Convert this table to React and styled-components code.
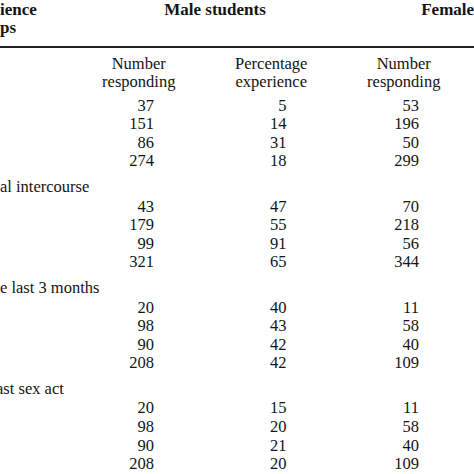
import React from 'react';
import styled, { createGlobalStyle } from 'styled-components';

const GlobalStyle = createGlobalStyle`
  html, body {
    margin: 0;
    padding: 0;
    background: #fff;
  }
`;

const Page = styled.div`
  width: 474px;
  height: 474px;
  overflow: hidden;
  background: #fff;
  color: #141414;
  font-family: "Liberation Serif", "Times New Roman", serif;
`;

const Table = styled.div`
  display: grid;
  grid-template-columns: 72.5px repeat(4, 132.5px);
  width: max-content;
`;

const GroupHead = styled.div`
  font-weight: 700;
  font-size: 17px;
  line-height: 18px;
  padding-top: 1px;
  white-space: nowrap;
`;

const SpanHead = styled(GroupHead)`
  grid-column: span 2;
  text-align: center;
  padding-left: 20px;
`;

const Rule = styled.div`
  grid-column: 1 / -1;
  height: 2px;
  margin-top: 9px;
  background: #222;
`;

const Cell = styled.div`
  font-size: 16.5px;
  line-height: 18.6px;
  white-space: nowrap;
`;

const SubHead = styled(Cell)`
  text-align: center;
  margin-top: 6.6px;
  margin-bottom: 4.8px;
`;

const Value = styled(Cell)`
  text-align: right;
  padding-right: 51px;
`;

const SectionLabel = styled(Cell)`
  grid-column: 1 / -1;
  margin-top: 7px;
  margin-bottom: 1px;
  margin-left: ${props => props.$shift || 0}px;
`;

const sections = [
  {
    label: null,
    rows: [
      ['37', '5', '53'],
      ['151', '14', '196'],
      ['86', '31', '50'],
      ['274', '18', '299'],
    ],
  },
  {
    label: 'al intercourse',
    rows: [
      ['43', '47', '70'],
      ['179', '55', '218'],
      ['99', '91', '56'],
      ['321', '65', '344'],
    ],
  },
  {
    label: 'e last 3 months',
    rows: [
      ['20', '40', '11'],
      ['98', '43', '58'],
      ['90', '42', '40'],
      ['208', '42', '109'],
    ],
  },
  {
    label: 'ast sex act',
    shift: -4,
    rows: [
      ['20', '15', '11'],
      ['98', '20', '58'],
      ['90', '21', '40'],
      ['208', '20', '109'],
    ],
  },
];

export default function App() {
  return (
    <>
      <GlobalStyle />
      <Page>
        <Table>
          <GroupHead>
            ience
            <br />
            ps
          </GroupHead>
          <SpanHead>Male students</SpanHead>
          <SpanHead>Female students</SpanHead>
          <Rule />

          <SubHead />
          <SubHead>
            Number
            <br />
            responding
          </SubHead>
          <SubHead>
            Percentage
            <br />
            experience
          </SubHead>
          <SubHead>
            Number
            <br />
            responding
          </SubHead>
          <SubHead />

          {sections.map((section, i) => (
            <React.Fragment key={i}>
              {section.label && (
                <SectionLabel $shift={section.shift}>{section.label}</SectionLabel>
              )}
              {section.rows.map((row, j) => (
                <React.Fragment key={j}>
                  <Cell />
                  {row.map((v, k) => (
                    <Value key={k}>{v}</Value>
                  ))}
                  <Cell />
                </React.Fragment>
              ))}
            </React.Fragment>
          ))}
        </Table>
      </Page>
    </>
  );
}
